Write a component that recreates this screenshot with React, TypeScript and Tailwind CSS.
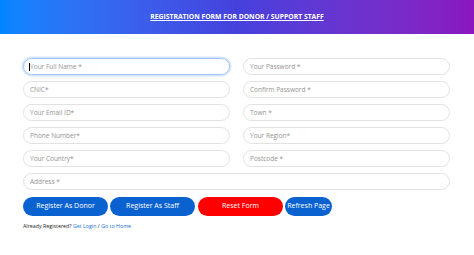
export default function App() {
  const left = ["Your Full Name *", "CNIC*", "Your Email ID*", "Phone Number*", "Your Country*"];
  const right = ["Your Password *", "Confirm Password *", "Town *", "Your Region*", "Postcode *"];
  const rows = left.map((l, i) => [l, right[i]]);

  return (
    <div className="w-[474px] h-[255px] bg-white font-['Open_Sans',sans-serif] overflow-hidden">
      {/* Header */}
      <div className="h-[34px] flex items-center justify-center bg-gradient-to-r from-[#0086ff] via-[#4540dd] to-[#8a16bf]">
        <span className="text-white font-bold text-[6.8px] underline">
          REGISTRATION FORM FOR DONOR / SUPPORT STAFF
        </span>
      </div>

      {/* Form */}
      <div className="pl-[23px] pt-[24px] w-[450px]">
        <div className="flex flex-col gap-[6px]">
          {rows.map(([l, r], i) => (
            <div key={i} className="flex gap-[13px]">
              <div
                className={
                  i === 0
                    ? "w-[207px] h-[17px] rounded-full border border-[#9ec2f5] shadow-[0_0_0_1.5px_#d6e6fc] flex items-center pl-[5px] text-[6.5px] text-[#939393]"
                    : "w-[207px] h-[17px] rounded-full border border-[#e2e2e2] flex items-center pl-[6px] text-[6.5px] text-[#939393]"
                }
              >
                {i === 0 && <span className="w-[0.6px] h-[8px] bg-black mr-[0.5px]" />}
                {l}
              </div>
              <div className="w-[207px] h-[17px] rounded-full border border-[#e2e2e2] flex items-center pl-[6px] text-[6.5px] text-[#939393]">
                {r}
              </div>
            </div>
          ))}
          <div className="w-[427px] h-[17px] rounded-full border border-[#e2e2e2] flex items-center pl-[6px] text-[6.5px] text-[#939393]">
            Address *
          </div>
        </div>

        {/* Buttons */}
        <div className="flex gap-[2px] mt-[7px]">
          <button className="w-[85px] h-[19px] rounded-full bg-[#0a62d0] text-white text-[7px]">Register As Donor</button>
          <button className="w-[85px] h-[19px] rounded-full bg-[#0a62d0] text-white text-[7px]">Register As Staff</button>
          <button className="w-[85px] h-[19px] rounded-full bg-[#ff0000] text-white text-[7px] ml-[1px]">Reset Form</button>
          <button className="w-[47px] h-[19px] rounded-full bg-[#0a62d0] text-white text-[7px]">Refresh Page</button>
        </div>

        <div className="mt-[7px] text-[5.3px] text-[#222]">
          Already Registered? <span className="text-[#1a6fd8]">Get Login</span> /{" "}
          <span className="text-[#1a6fd8]">Go to Home</span>
        </div>
      </div>
    </div>
  );
}
